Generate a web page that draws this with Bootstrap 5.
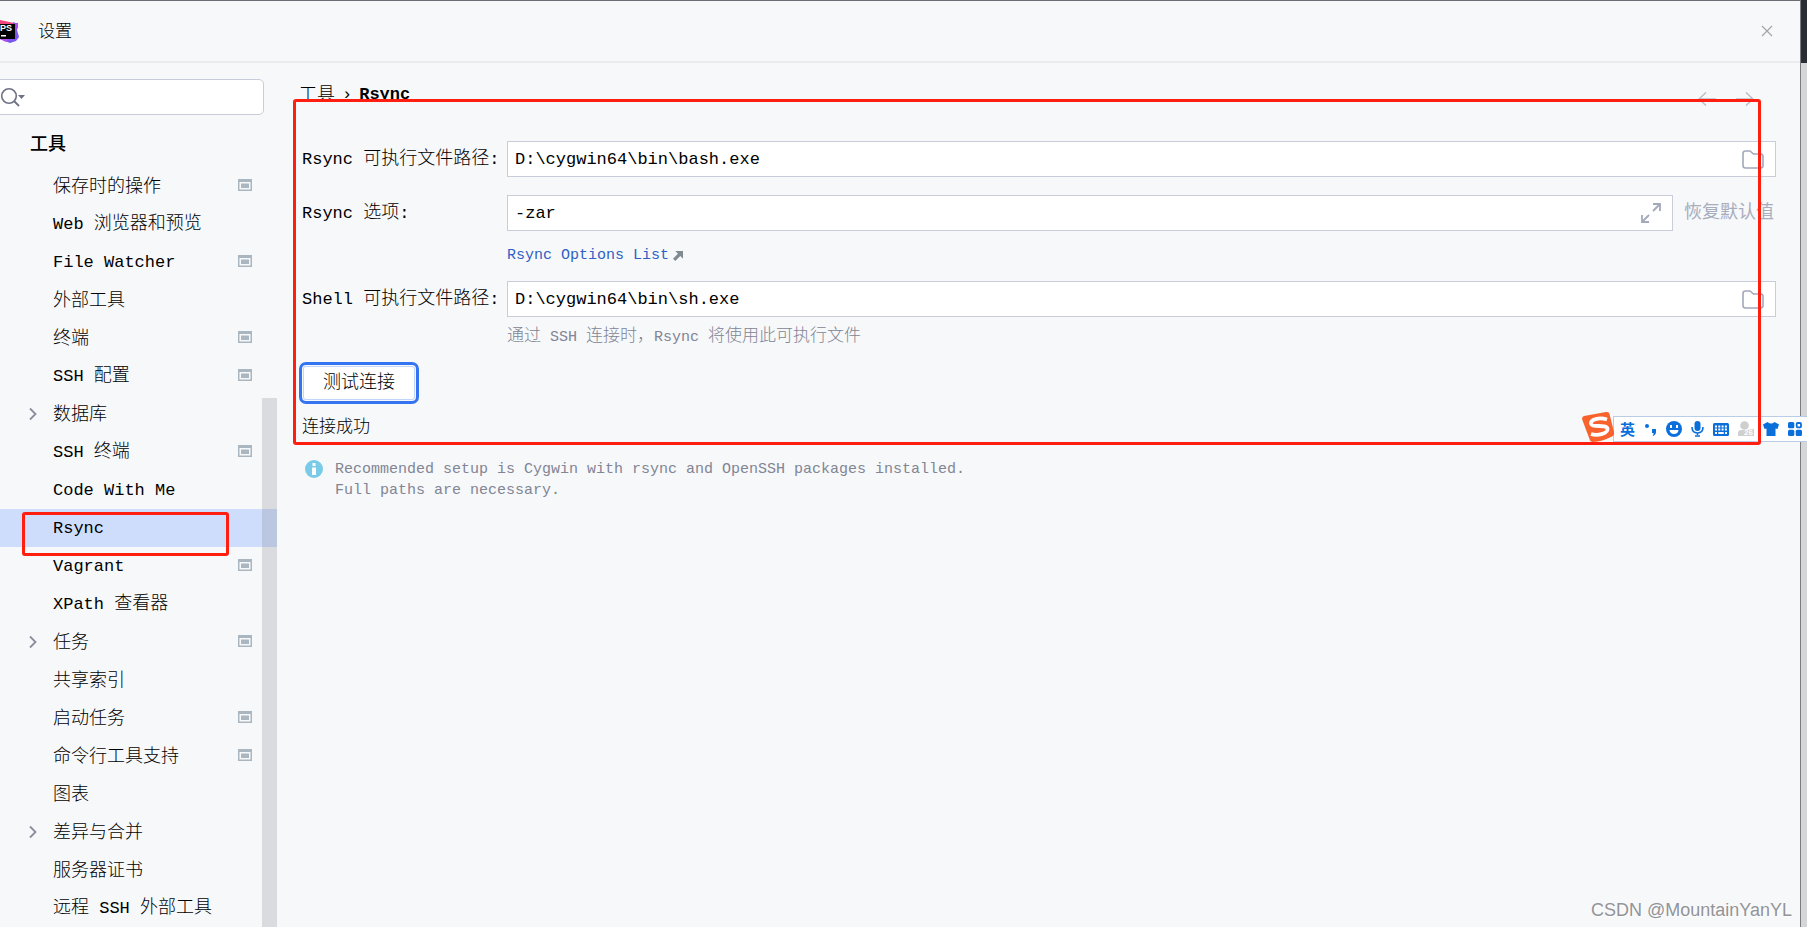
<!DOCTYPE html>
<html lang="zh-CN">
<head>
<meta charset="utf-8">
<meta name="viewport" content="width=device-width, initial-scale=1">
<title>设置</title>
<link rel="stylesheet" href="https://cdn.jsdelivr.net/npm/bootstrap@5.3.0/dist/css/bootstrap.min.css">
<style>
:root { --line: #c9ccd9; --ink-soft: #818594; --mark: #ff1e10; --panel: #f7f8fa; }
body { font: 300 18px/24px "Liberation Mono", "Noto Sans CJK SC", monospace; color: #000; background: #d5d6d8; }
svg { display: block; flex: none; }
.lt { font-size: 17px; font-weight: 400; }
.dialog-wrap { min-height: 100vh; padding-right: 6px; background: linear-gradient(#2b2d35 63px, #d5d6d8 63px); }
.dialog { min-height: 100vh; background: var(--panel); border-top: 1px solid #6c6e76; border-right: 1px solid #7b7d80; }
.titlebar { height: 62px; border-bottom: 2px solid #ebecf0; padding-right: 27px; font-size: 17px; }
.titlebar .caption { padding: 3px 0 0 18px; }
.plain-btn { background: none; border: 0; padding: 0; color: inherit; }
.side { width: 277px; flex: none; }
.search { height: 36px; width: 265px; margin: 16px 0 0 -1px; background: #fff; border: 1px solid var(--line); border-radius: 0 5px 5px 0; }
.search input { border: 0; outline: 0; background: none; min-width: 0; }
.side-title { padding: 18px 0 0 30px; height: 52px; font-weight: 500; }
.tree a { height: 38px; padding: 1px 25px 0 27px; color: #000; text-decoration: none; }
.tree .arrow { width: 26px; flex: none; padding-left: 2px; }
.tree .arrow svg { margin-bottom: 2px; }
.tree a > svg { margin-bottom: 4px; }
.tree .active { background: #cfddfd; }
.thumb { left: 262px; width: 15px; top: 335px; bottom: 0; background: rgba(120, 120, 122, .22); }
.outline { border: 3px solid var(--mark); border-radius: 3px; pointer-events: none; z-index: 3; }
.outline-row { left: 22px; right: 48px; top: 3px; height: 44px; }
.outline-form { inset: -18px 15px -5px -9px; }
.main-pane { padding: 18px 24px 0 25px; }
.crumbs { height: 36px; margin-left: -3px; }
.crumb-path { gap: 7px; padding-top: 2px; }
.nav-arrows { gap: 20px; padding: 11px 22px 0 0; color: #bcbec4; }
.form-area { padding-top: 24px; }
.fields { grid-template-columns: 205px 1fr; }
.fields label { white-space: nowrap; padding-top: 1px; }
.row-gap { margin-top: 18px; }
.sub-line { height: 24px; margin-top: 8px; white-space: nowrap; }
.field { height: 36px; background: #fff; border: 1px solid var(--line); padding: 0 11px 0 7px; color: #a0a5b8; }
.field input { border: 0; outline: 0; background: none; padding: 2px 0 0; font-size: 17px; color: #000; min-width: 0; }
.small-zh { font-size: 17px; }
.small-lt { font-size: 15px; font-weight: 400; }
.hint { color: var(--ink-soft); }
.opt-link { color: #2f5fc4; font-size: 15px; font-weight: 400; padding-top: 5px; }
.reset { width: 103px; color: #a8adbd; padding-right: 2px; }
.test-btn { width: 120px; height: 42px; margin: 13px 0 0 -3px; background: #fff; border: 3px solid #3574f0; border-radius: 7px; font-weight: 300; box-shadow: inset 0 0 0 1px #f7f8fa, inset 0 0 0 2px #c2d6fc; }
.result { padding-top: 12px; }
.note { font-size: 15px; line-height: 21px; font-weight: 400; padding-top: 19px; }
.note svg { margin: 1px 12px 0 3px; }
.ime { right: 0; top: 416px; height: 26px; width: 194px; padding: 0 5px 0 6px; background: #fff; border: 1px solid #b9cee6; border-right: 0; color: #0a6fdb; z-index: 2; }
.ime-logo { left: -32px; top: -6px; }
.ime b { font: 700 15px/24px "Noto Sans CJK SC", sans-serif; }
.sign { right: 15px; bottom: 4px; font: 18px/26px "Liberation Sans", sans-serif; color: #929498; text-shadow: 1px 1px 0 #fff; }
</style>
</head>
<body>
<svg class="d-none">
  <symbol id="i-win" viewBox="0 0 14 12"><path fill="#aab7c0" fill-rule="evenodd" d="M0 0h14v12H0zM1.500 3v7.500h11V3z"/><path fill="#aab7c0" d="M3 4.500h8V9H3z"/></symbol>
  <symbol id="i-more" viewBox="0 0 8 14"><path d="M1 1.500 6.500 7 1 12.500" fill="none" stroke="#8b8d9c" stroke-width="1.800"/></symbol>
  <symbol id="i-folder" viewBox="0 0 22 19"><path d="M1 3.500Q1 1 3.500 1H8l3.500 3H18.500Q21 4 21 6.500v9Q21 18 18.500 18h-15Q1 18 1 15.500z" fill="none" stroke="#a3a8ba" stroke-width="1.600"/></symbol>
</svg>
<div class="dialog-wrap position-relative">
<div class="dialog d-flex flex-column">
  <header class="titlebar d-flex align-items-center">
    <svg width="20" height="26" viewBox="0 0 20 26"><path fill="#f0447c" d="M0 2 14 5 8 12H0z"/><path fill="#7b55f0" d="m13 4 5 2-1 6 2 7-3 4-6 2-10-4v-3l14-2z"/><path fill="#b24af2" d="M15 5h3v5l-3 2zM0 21h9l-3 3z"/><path d="M0 6h15v15H0z"/><path fill="#fff" d="M1 17h5v1.500H1z"/><text x="0" y="13" fill="#fff" font-family="Liberation Sans" font-size="9" font-weight="700">PS</text></svg>
    <span class="flex-grow-1 caption">设置</span>
    <button class="plain-btn" aria-label="关闭"><svg width="12" height="12" viewBox="0 0 12 12"><path d="m1 1 10 10M11 1 1 11" stroke="#a2a4a8" stroke-width="1.200"/></svg></button>
  </header>
  <div class="d-flex flex-grow-1 position-relative">
    <aside class="side">
      <div class="search d-flex align-items-center">
        <svg width="26" height="20" viewBox="0 0 26 20"><circle cx="9" cy="9" r="7.300" fill="none" stroke="#6f7285" stroke-width="1.600"/><path d="m14 14 5 5" stroke="#6f7285" stroke-width="1.800"/><path fill="#6f7285" d="M18 8h7l-3.500 4z"/></svg>
        <input class="flex-grow-1" type="search" aria-label="搜索">
      </div>
      <div class="side-title">工具</div>
      <nav class="tree">
        <a href="#" class="d-flex align-items-center"><span class="arrow"></span><span class="flex-grow-1">保存时的操作</span><svg width="14" height="12"><use href="#i-win"/></svg></a>
        <a href="#" class="d-flex align-items-center"><span class="arrow"></span><span><span class="lt">Web </span>浏览器和预览</span></a>
        <a href="#" class="d-flex align-items-center"><span class="arrow"></span><span class="flex-grow-1 lt">File Watcher</span><svg width="14" height="12"><use href="#i-win"/></svg></a>
        <a href="#" class="d-flex align-items-center"><span class="arrow"></span><span>外部工具</span></a>
        <a href="#" class="d-flex align-items-center"><span class="arrow"></span><span class="flex-grow-1">终端</span><svg width="14" height="12"><use href="#i-win"/></svg></a>
        <a href="#" class="d-flex align-items-center"><span class="arrow"></span><span class="flex-grow-1"><span class="lt">SSH </span>配置</span><svg width="14" height="12"><use href="#i-win"/></svg></a>
        <a href="#" class="d-flex align-items-center"><span class="arrow"><svg width="8" height="14"><use href="#i-more"/></svg></span><span>数据库</span></a>
        <a href="#" class="d-flex align-items-center"><span class="arrow"></span><span class="flex-grow-1"><span class="lt">SSH </span>终端</span><svg width="14" height="12"><use href="#i-win"/></svg></a>
        <a href="#" class="d-flex align-items-center"><span class="arrow"></span><span class="lt">Code With Me</span></a>
        <a href="#" class="d-flex align-items-center active position-relative" aria-current="page"><span class="arrow"></span><span class="lt">Rsync</span><span class="outline outline-row position-absolute"></span></a>
        <a href="#" class="d-flex align-items-center"><span class="arrow"></span><span class="flex-grow-1 lt">Vagrant</span><svg width="14" height="12"><use href="#i-win"/></svg></a>
        <a href="#" class="d-flex align-items-center"><span class="arrow"></span><span><span class="lt">XPath </span>查看器</span></a>
        <a href="#" class="d-flex align-items-center"><span class="arrow"><svg width="8" height="14"><use href="#i-more"/></svg></span><span class="flex-grow-1">任务</span><svg width="14" height="12"><use href="#i-win"/></svg></a>
        <a href="#" class="d-flex align-items-center"><span class="arrow"></span><span>共享索引</span></a>
        <a href="#" class="d-flex align-items-center"><span class="arrow"></span><span class="flex-grow-1">启动任务</span><svg width="14" height="12"><use href="#i-win"/></svg></a>
        <a href="#" class="d-flex align-items-center"><span class="arrow"></span><span class="flex-grow-1">命令行工具支持</span><svg width="14" height="12"><use href="#i-win"/></svg></a>
        <a href="#" class="d-flex align-items-center"><span class="arrow"></span><span>图表</span></a>
        <a href="#" class="d-flex align-items-center"><span class="arrow"><svg width="8" height="14"><use href="#i-more"/></svg></span><span>差异与合并</span></a>
        <a href="#" class="d-flex align-items-center"><span class="arrow"></span><span>服务器证书</span></a>
        <a href="#" class="d-flex align-items-center"><span class="arrow"></span><span>远程<span class="lt"> SSH </span>外部工具</span></a>
      </nav>
      <div class="thumb position-absolute"></div>
    </aside>
    <main class="main-pane flex-grow-1">
      <div class="crumbs d-flex justify-content-between align-items-start">
        <div class="crumb-path d-flex"><span>工具</span><span class="lt">›</span><b class="lt fw-bold">Rsync</b></div>
        <div class="nav-arrows d-flex">
          <button class="plain-btn" aria-label="后退"><svg width="18" height="14" viewBox="0 0 18 14"><path d="M18 7H1M8 .5 1 7l7 6.500" fill="none" stroke="currentColor" stroke-width="1.500"/></svg></button>
          <button class="plain-btn" aria-label="前进"><svg width="18" height="14" viewBox="0 0 18 14"><path d="M0 7h17M10 .5 17 7l-7 6.500" fill="none" stroke="currentColor" stroke-width="1.500"/></svg></button>
        </div>
      </div>
      <section class="form-area position-relative">
        <div class="outline outline-form position-absolute"></div>
        <div class="fields d-grid align-items-center">
          <label for="exe"><span class="lt">Rsync </span>可执行文件路径<span class="lt">:</span></label>
          <div class="field d-flex align-items-center"><input id="exe" class="flex-grow-1" value="D:\cygwin64\bin\bash.exe"><button class="plain-btn" aria-label="浏览"><svg width="22" height="19"><use href="#i-folder"/></svg></button></div>
        </div>
        <div class="fields d-grid align-items-center row-gap">
          <label for="opts"><span class="lt">Rsync </span>选项<span class="lt">:</span></label>
          <div class="d-flex align-items-center">
            <div class="field d-flex align-items-center flex-grow-1"><input id="opts" class="flex-grow-1" value="-zar"><button class="plain-btn" aria-label="展开"><svg width="20" height="20" viewBox="0 0 20 20"><path d="M12 1h7v7M19 1l-7 7M1 12v7h7M1 19l7-7" fill="none" stroke="#a3a8ba" stroke-width="1.800"/></svg></button></div>
            <button class="plain-btn reset text-end" disabled>恢复默认值</button>
          </div>
        </div>
        <div class="fields d-grid sub-line">
          <span></span>
          <a href="#" class="opt-link d-flex align-items-center gap-1 text-decoration-none">Rsync Options List <svg width="10" height="10" viewBox="0 0 11 11"><path d="M2.500 0H11v8.500L8 5.600 2.500 11 0 8.500l5.400-5.400z" fill="#7f8b91"/></svg></a>
        </div>
        <div class="fields d-grid align-items-center row-gap">
          <label for="shell"><span class="lt">Shell </span>可执行文件路径<span class="lt">:</span></label>
          <div class="field d-flex align-items-center"><input id="shell" class="flex-grow-1" value="D:\cygwin64\bin\sh.exe"><button class="plain-btn" aria-label="浏览"><svg width="22" height="19"><use href="#i-folder"/></svg></button></div>
        </div>
        <div class="fields d-grid sub-line">
          <span></span>
          <span class="hint small-zh">通过<span class="small-lt"> SSH </span>连接时，<span class="small-lt">Rsync </span>将使用此可执行文件</span>
        </div>
        <button class="plain-btn test-btn d-block">测试连接</button>
        <div class="small-zh result">连接成功</div>
      </section>
      <div class="note hint d-flex">
        <svg width="18" height="18" viewBox="0 0 18 18"><circle cx="9" cy="9" r="9" fill="#79cbe8"/><path fill="#fff" d="M7.500 3h3v3h-3zM7 7.500h4V15H7z"/></svg>
        <div>Recommended setup is Cygwin with rsync and OpenSSH packages installed.<br>Full paths are necessary.</div>
      </div>
    </main>
  </div>
</div>
<div class="ime position-absolute d-flex align-items-center justify-content-between">
  <svg class="ime-logo position-absolute" width="34" height="32" viewBox="0 0 34 32"><path fill="#f8622d" d="M2 5 24 1q3-.5 3.500 2L32 21q.5 3-2 4.500-10 5-19 5.500-3 0-3.500-3L0 8q0-2.500 2-3z"/><path d="M25 8.500C17 6 8.500 8.500 9 12.500c1 5 15 0 16.500 5C26.500 22 16 25.500 9 23" fill="none" stroke="#fff" stroke-width="3.800"/></svg>
  <b>英</b>
  <svg width="13" height="13" viewBox="0 0 13 13"><circle cx="3" cy="3" r="2" fill="currentColor"/><path fill="currentColor" d="M8 6h4v3q0 3-3.500 4 1.500-2 1-3H8z"/></svg>
  <svg width="16" height="16" viewBox="0 0 16 16"><circle cx="8" cy="8" r="8" fill="currentColor"/><path fill="#fff" d="M4 4h2v3H4zM10 4h2v3h-2zM3.500 9h9Q12 13 8 13T3.500 9z"/></svg>
  <svg width="13" height="16" viewBox="0 0 13 16"><rect x="3.500" width="6" height="10" rx="3" fill="currentColor"/><path d="M1 6q0 6 5.500 6T12 6M6.500 12v2M4 15h5" fill="none" stroke="currentColor" stroke-width="1.600"/></svg>
  <svg width="16" height="13" viewBox="0 0 16 13"><rect width="16" height="13" rx="1.500" fill="currentColor"/><path d="M2 3.500h12M2 6.500h12" stroke="#fff" stroke-width="1.800" stroke-dasharray="2 1.300"/><path d="M2 10h2m1.300 0h5.400M12 10h2" stroke="#fff" stroke-width="1.800"/></svg>
  <svg width="16" height="16" viewBox="0 0 16 16"><circle cx="6.500" cy="4.500" r="4.300" fill="#cfcfcf"/><path fill="#cfcfcf" d="M0 15v-3q0-3 4-3h5l7-1v7z"/><text x="6" y="14" font-family="Liberation Sans" font-size="8" font-weight="700" fill="#fff">26</text></svg>
  <svg width="16" height="14" viewBox="0 0 16 14"><path fill="currentColor" d="M4.500 0Q8 3 11.500 0L16 2.500 14.500 7 12.500 6.500V14h-9V6.500l-2 .5L0 2.500z"/></svg>
  <svg width="14" height="14" viewBox="0 0 14 14"><g fill="currentColor"><rect width="6.300" height="6.300" rx="1.500"/><rect y="7.700" width="6.300" height="6.300" rx="1.500"/><rect x="7.700" y="7.700" width="6.300" height="6.300" rx="1.500"/></g><rect x="8.700" y="1" width="4.300" height="4.300" rx="1" fill="none" stroke="currentColor" stroke-width="1.800"/></svg>
</div>
<div class="sign position-absolute">CSDN @MountainYanYL</div>
</div>
<script src="https://cdn.jsdelivr.net/npm/bootstrap@5.3.0/dist/js/bootstrap.bundle.min.js"></script>
</body>
</html>
